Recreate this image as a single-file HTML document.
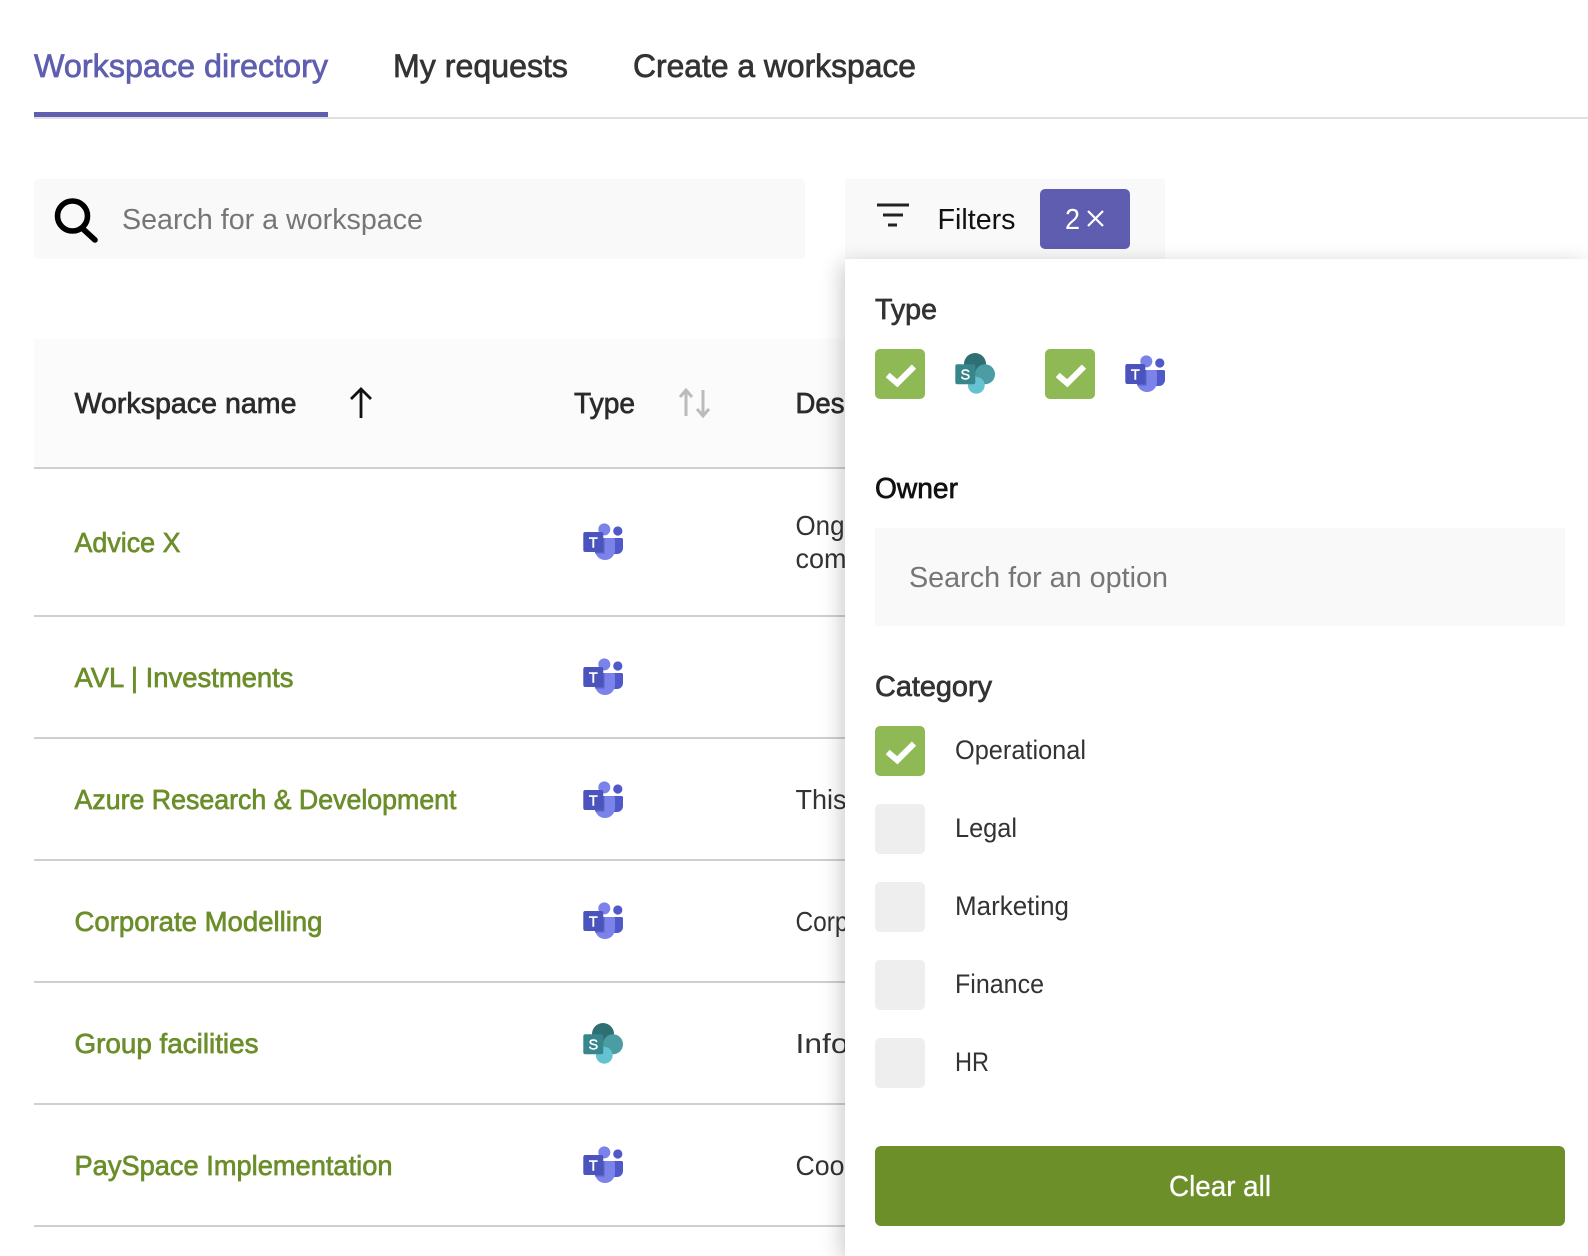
<!DOCTYPE html>
<html lang="en"><head><meta charset="utf-8"><title>Workspace directory</title>
<style>
html,body{margin:0;padding:0;background:#fff;width:1588px;height:1256px;overflow:hidden}
svg{position:absolute;left:0;top:0}
text{font-family:"Liberation Sans",sans-serif}
.m{stroke-width:.7px;paint-order:stroke}
#panel{position:absolute;left:845px;top:259px;width:743px;height:997px;background:#fff;box-shadow:-4px 4px 20px rgba(0,0,0,.2)}
</style></head><body>
<svg width="1588" height="1256" viewBox="0 0 1588 1256" xmlns="http://www.w3.org/2000/svg">
<defs>
<symbol id="teams" viewBox="0 0 40 37" overflow="visible">
<circle cx="34.8" cy="8" r="4.6" fill="#5059c9"/>
<path d="M29 15h9.5a1.5 1.5 0 0 1 1.5 1.5V25a6 6 0 0 1-6 6h-5z" fill="#5059c9"/>
<circle cx="21.3" cy="6.400" r="6" fill="#7b83eb"/>
<path d="M12 15h18a2 2 0 0 1 2 2v10a10 10 0 0 1-20 0z" fill="#7b83eb"/>
<path d="M12 15h9.5v15.500H12z" fill="#5a62c4"/>
<rect x=".3" y="9" width="20" height="20" rx="2" fill="#4b53bc"/>
<text x="10.300" y="24.300" text-anchor="middle" font-size="14.500" font-weight="400" stroke="#fff" stroke-width=".5" fill="#fff">T</text>
</symbol>
<symbol id="sp" viewBox="0 0 40 41" overflow="visible">
<circle cx="20" cy="11" r="11" fill="#2f6f73"/>
<circle cx="30" cy="21.3" r="10" fill="#4b9da3"/>
<circle cx="21.3" cy="32.3" r="8.4" fill="#65c2d1"/>
<rect x=".3" y="11.3" width="20" height="20" rx="2" fill="#37868c"/>
<text x="10.300" y="26.500" text-anchor="middle" font-size="14.500" stroke="#fff" stroke-width=".4" fill="#fff">S</text>
</symbol>
<symbol id="chk" viewBox="0 0 50 50" overflow="visible">
<rect width="50" height="50" rx="5" fill="#8fb954"/>
<path d="M12.7 26l9.600 8.300 16.700-16.700" fill="none" stroke="#fff" stroke-width="6"/>
</symbol>
</defs>

<!-- tabs -->
<rect x="34" y="117" width="1554" height="2" fill="#e0e0e0"/>
<rect x="34" y="112" width="294" height="5" fill="#5f5fb0"/>
<text class="m" x="34" y="77" font-size="32" textLength="294" lengthAdjust="spacingAndGlyphs" fill="#5f5fb0" stroke="#5f5fb0">Workspace directory</text>
<text class="m" x="393" y="77" font-size="32" textLength="175" lengthAdjust="spacingAndGlyphs" fill="#333" stroke="#333">My requests</text>
<text class="m" x="633" y="77" font-size="32" textLength="283" lengthAdjust="spacingAndGlyphs" fill="#333" stroke="#333">Create a workspace</text>

<!-- search -->
<rect x="34" y="179" width="771" height="80" rx="4" fill="#f9f9f9"/>
<circle cx="72.500" cy="216" r="15" fill="none" stroke="#000" stroke-width="5.600"/>
<path d="M83 229l12 11" stroke="#000" stroke-width="5.600" stroke-linecap="round"/>
<text x="122" y="229" font-size="29" textLength="301" lengthAdjust="spacingAndGlyphs" fill="#767676">Search for a workspace</text>

<!-- filters -->
<rect x="845" y="179" width="320" height="80" fill="#f9f9f9"/>
<path d="M877 205h32M883 215h20M888 225h9" stroke="#222" stroke-width="3" fill="none"/>
<text x="937.500" y="229" font-size="29" textLength="78" lengthAdjust="spacingAndGlyphs" fill="#111">Filters</text>
<rect x="1040" y="189" width="90" height="60" rx="5" fill="#5f5db0"/>
<text x="1065" y="229" font-size="29" textLength="15" lengthAdjust="spacingAndGlyphs" fill="#fff">2</text>
<path d="M1088 211l15 15M1103 211l-15 15" stroke="#fff" stroke-width="2.200" fill="none"/>

<!-- table header -->
<rect x="34" y="339" width="811" height="129" fill="#fbfbfb"/>
<rect x="34" y="467" width="811" height="2" fill="#cfcfcf"/>
<text class="m" x="74.500" y="413" font-size="29" textLength="222" lengthAdjust="spacingAndGlyphs" fill="#2b2b2b" stroke="#2b2b2b">Workspace name</text>
<path d="M361 418V389M351 399l10-10 10 10" fill="none" stroke="#111" stroke-width="2.800"/>
<text class="m" x="574" y="413" font-size="29" textLength="61" lengthAdjust="spacingAndGlyphs" fill="#2b2b2b" stroke="#2b2b2b">Type</text>
<path d="M686 416V390M680 397l6-7 6 7M703 390v26M697 409l6 7 6-7" fill="none" stroke="#bbb" stroke-width="3"/>
<text class="m" x="795.500" y="413" font-size="29" textLength="49" lengthAdjust="spacingAndGlyphs" fill="#2b2b2b" stroke="#2b2b2b">Des</text>

<!-- rows -->
<g fill="#cfcfcf">
<rect x="34" y="615" width="811" height="2"/><rect x="34" y="737" width="811" height="2"/><rect x="34" y="859" width="811" height="2"/><rect x="34" y="981" width="811" height="2"/><rect x="34" y="1103" width="811" height="2"/><rect x="34" y="1225" width="811" height="2"/>
</g>
<g font-size="28" fill="#6b8e2a" stroke="#6b8e2a">
<text class="m" x="74.500" y="552" textLength="106" lengthAdjust="spacingAndGlyphs">Advice X</text>
<text class="m" x="74.500" y="687" textLength="219" lengthAdjust="spacingAndGlyphs">AVL | Investments</text>
<text class="m" x="74.500" y="809" textLength="382" lengthAdjust="spacingAndGlyphs">Azure Research &amp; Development</text>
<text class="m" x="74.500" y="931" textLength="248" lengthAdjust="spacingAndGlyphs">Corporate Modelling</text>
<text class="m" x="74.500" y="1053" textLength="184" lengthAdjust="spacingAndGlyphs">Group facilities</text>
<text class="m" x="74.500" y="1175" textLength="318" lengthAdjust="spacingAndGlyphs">PaySpace Implementation</text>
</g>
<use href="#teams" x="583" y="523" width="40" height="37"/>
<use href="#teams" x="583" y="658" width="40" height="37"/>
<use href="#teams" x="583" y="781" width="40" height="37"/>
<use href="#teams" x="583" y="902" width="40" height="37"/>
<use href="#sp" x="583" y="1023" width="40" height="41"/>
<use href="#teams" x="583" y="1146" width="40" height="37"/>
<g font-size="27.500" fill="#333">
<text x="795.500" y="535" textLength="49" lengthAdjust="spacingAndGlyphs">Ong</text>
<text x="795.500" y="568" textLength="51" lengthAdjust="spacingAndGlyphs">com</text>
<text x="795.500" y="809" textLength="51" lengthAdjust="spacingAndGlyphs">This</text>
<text x="795.500" y="931" textLength="53" lengthAdjust="spacingAndGlyphs">Corp</text>
<text x="795.500" y="1053" textLength="53" lengthAdjust="spacingAndGlyphs">Info</text>
<text x="795.500" y="1175" textLength="49" lengthAdjust="spacingAndGlyphs">Coo</text>
</g>
</svg>

<div id="panel"></div>

<svg width="1588" height="1256" viewBox="0 0 1588 1256" xmlns="http://www.w3.org/2000/svg">
<text class="m" x="875" y="319" font-size="28.500" textLength="62" lengthAdjust="spacingAndGlyphs" fill="#333" stroke="#333">Type</text>
<use href="#chk" x="875" y="349" width="50" height="50"/>
<use href="#sp" x="955" y="353" width="40" height="41"/>
<use href="#chk" x="1045" y="349" width="50" height="50"/>
<use href="#teams" x="1125" y="355" width="40" height="37"/>

<text class="m" x="875" y="498" font-size="28.500" textLength="83" lengthAdjust="spacingAndGlyphs" fill="#111" stroke="#111">Owner</text>
<rect x="875" y="528" width="690" height="98" fill="#f9f9f9"/>
<text x="909" y="587" font-size="29" textLength="259" lengthAdjust="spacingAndGlyphs" fill="#767676">Search for an option</text>

<text class="m" x="875" y="696" font-size="28.500" textLength="117" lengthAdjust="spacingAndGlyphs" fill="#333" stroke="#333">Category</text>
<use href="#chk" x="875" y="726" width="50" height="50"/>
<g fill="#eeeeee">
<rect x="875" y="804" width="50" height="50" rx="5"/>
<rect x="875" y="882" width="50" height="50" rx="5"/>
<rect x="875" y="960" width="50" height="50" rx="5"/>
<rect x="875" y="1038" width="50" height="50" rx="5"/>
</g>
<g font-size="26.500" fill="#333">
<text x="955" y="759" textLength="131" lengthAdjust="spacingAndGlyphs">Operational</text>
<text x="955" y="837" textLength="62" lengthAdjust="spacingAndGlyphs">Legal</text>
<text x="955" y="915" textLength="114" lengthAdjust="spacingAndGlyphs">Marketing</text>
<text x="955" y="993" textLength="89" lengthAdjust="spacingAndGlyphs">Finance</text>
<text x="955" y="1071" textLength="34" lengthAdjust="spacingAndGlyphs">HR</text>
</g>

<rect x="875" y="1146" width="690" height="80" rx="6" fill="#6c8f2a"/>
<text x="1169" y="1196" font-size="29" textLength="102" lengthAdjust="spacingAndGlyphs" fill="#fff" stroke="#fff" stroke-width=".3">Clear all</text>
</svg>
</body></html>
